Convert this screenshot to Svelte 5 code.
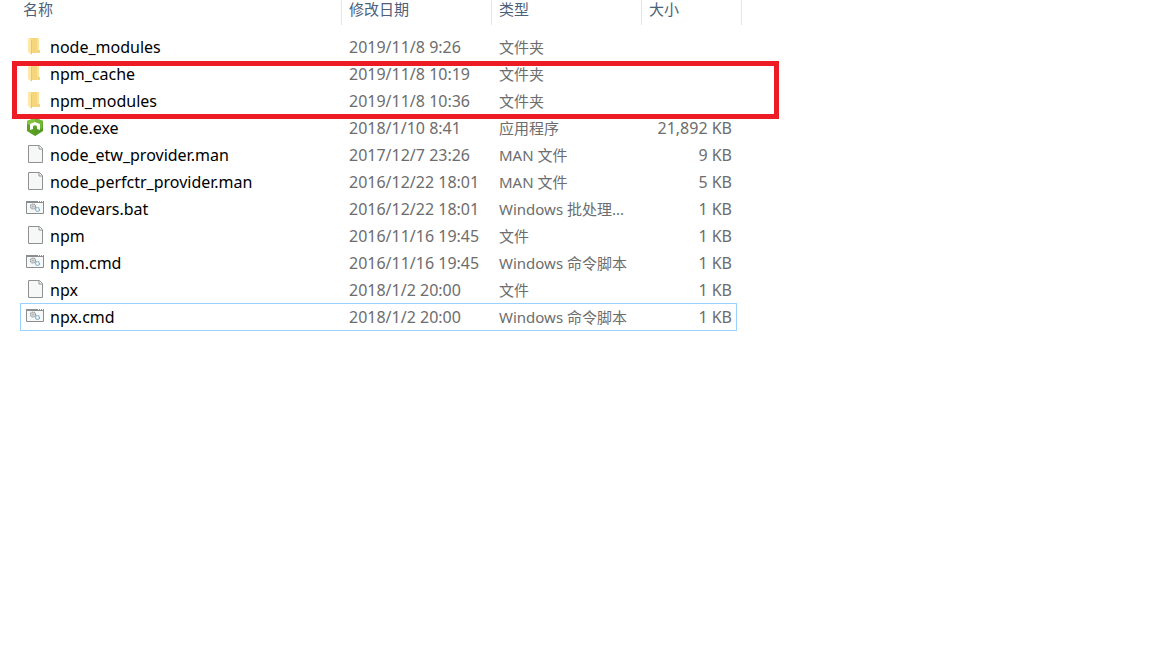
<script lang="ts">
	type Kind = 'folder' | 'node' | 'page' | 'script';
	type Entry = { name: string; date: string; type: string; size: string; kind: Kind };

	const columns = ['名称', '修改日期', '类型', '大小'];

	const entries: Entry[] = [
		{ name: 'node_modules', date: '2019/11/8 9:26', type: '文件夹', size: '', kind: 'folder' },
		{ name: 'npm_cache', date: '2019/11/8 10:19', type: '文件夹', size: '', kind: 'folder' },
		{ name: 'npm_modules', date: '2019/11/8 10:36', type: '文件夹', size: '', kind: 'folder' },
		{ name: 'node.exe', date: '2018/1/10 8:41', type: '应用程序', size: '21,892 KB', kind: 'node' },
		{ name: 'node_etw_provider.man', date: '2017/12/7 23:26', type: 'MAN 文件', size: '9 KB', kind: 'page' },
		{ name: 'node_perfctr_provider.man', date: '2016/12/22 18:01', type: 'MAN 文件', size: '5 KB', kind: 'page' },
		{ name: 'nodevars.bat', date: '2016/12/22 18:01', type: 'Windows 批处理...', size: '1 KB', kind: 'script' },
		{ name: 'npm', date: '2016/11/16 19:45', type: '文件', size: '1 KB', kind: 'page' },
		{ name: 'npm.cmd', date: '2016/11/16 19:45', type: 'Windows 命令脚本', size: '1 KB', kind: 'script' },
		{ name: 'npx', date: '2018/1/2 20:00', type: '文件', size: '1 KB', kind: 'page' },
		{ name: 'npx.cmd', date: '2018/1/2 20:00', type: 'Windows 命令脚本', size: '1 KB', kind: 'script' }
	];

	let focused = $state('npx.cmd');
</script>

{#snippet icon(kind: Kind)}
	<svg class="icon" viewBox="0 0 18 18" aria-hidden="true">
		{#if kind === 'folder'}
			<path d="M4 1h9v12h1v3H5z" fill="#f6d67c" />
			<path d="M11 1h2v12h-2z" fill="#fae39c" />
			<path d="M2 1h1l3 2v15l-4-3z" fill="#ffe8a6" />
			<path d="M5 3h1v14H5z" fill="#edc663" />
		{:else if kind === 'node'}
			<path d="M9 0l8 3v10l-8 5-8-5V3z" fill="#5b9f24" />
			<path d="M9 0l8 3-1 8L1 6V3z" fill="#85c441" />
			<path d="M9 0l8 3v10l-8 5z" fill="#438a1d" opacity=".25" />
			<path d="M4 12V6l5-2 5 2v6l-3-1V8L9 7 7 8v3z" fill="#fff" />
		{:else if kind === 'page'}
			<path d="M2.500.500h11l3 3v14h-14z" fill="#f6f7f7" stroke="#8f9091" />
			<path d="M13 .500v3.500h3.500" fill="#fff" stroke="#8f9091" />
		{:else}
			<path d="M.500 2.500h17v12H.500z" fill="#f7f8f8" stroke="#8b8e91" />
			<path d="M0 2h18v2H0z" fill="#8b8e91" />
			<path d="M12 2.500h1M14 2.500h1M16 2.500h1" stroke="#fff" />
			<circle cx="7" cy="7.500" r="2.500" fill="#eff0f0" stroke="#96999b" stroke-width="1.200" stroke-dasharray="1.500 .5" />
			<circle cx="7" cy="7.500" r=".8" fill="#fff" stroke="#888b8e" stroke-width=".7" />
			<circle cx="11.500" cy="10.500" r="2" fill="#e8f4fb" stroke="#7ba6c1" stroke-width="1.200" stroke-dasharray="1.300 .5" />
			<circle cx="11.500" cy="10.500" r=".7" fill="#fff" />
		{/if}
	</svg>
{/snippet}

<main>
	<table>
		<colgroup>
			<col class="col-name" />
			<col class="col-date" />
			<col class="col-type" />
			<col class="col-size" />
		</colgroup>
		<thead>
			<tr>
				{#each columns as column}
					<th scope="col"><button type="button">{column}</button></th>
				{/each}
			</tr>
		</thead>
		<tbody>
			{#each entries as entry}
				<tr
					class:focused={entry.name === focused}
					class:marked={entry.name === 'npm_cache'}
					onclick={() => (focused = entry.name)}
				>
					<td>
						<div class="name">
							{@render icon(entry.kind)}
							<span>{entry.name}</span>
						</div>
					</td>
					<td>{entry.date}</td>
					<td class="type">{entry.type}</td>
					<td class="size">{entry.size}</td>
				</tr>
			{/each}
		</tbody>
	</table>
</main>

<style>
	:global(body) {
		margin: 0;
		background: #fff;
	}

	main {
		padding-left: 20px;
		font-family: 'Noto Sans', 'Noto Sans CJK SC', sans-serif;
		font-size: 16px;
		line-height: 20px;
		color: #6d6d6d;
	}

	table {
		table-layout: fixed;
		width: 722px;
		border-collapse: separate;
		border-spacing: 0;
	}

	.col-name {
		width: 322px;
	}

	.col-date,
	.col-type {
		width: 150px;
	}

	.col-size {
		width: 100px;
	}

	th {
		height: 25px;
		padding: 0;
		border-right: 1px solid #e5e5e5;
		text-align: left;
		vertical-align: top;
	}

	th button {
		display: block;
		width: 100%;
		padding: 0 7px;
		border: 0;
		background: none;
		font-family: inherit;
		font-size: 15px;
		font-weight: 400;
		line-height: 18px;
		color: #4c607a;
		text-align: left;
	}

	th:first-child button {
		padding-left: 3px;
	}

	tbody::before {
		content: '';
		display: block;
		height: 9px;
	}

	tbody tr {
		position: relative;
	}

	td {
		height: 25px;
		padding: 0 7px 2px;
		white-space: nowrap;
	}

	td:first-child {
		padding-left: 6px;
	}

	td.type {
		font-size: 15px;
	}

	td.size {
		padding-right: 10px;
		text-align: right;
	}

	.name {
		display: flex;
		align-items: center;
		gap: 6px;
		color: #000;
	}

	.icon {
		width: 18px;
		height: 18px;
		margin-bottom: 2px;
	}

	.focused td:last-child::after {
		content: '';
		position: absolute;
		inset: -1px 5px 0 0;
		border: 1px solid #99d1ff;
		pointer-events: none;
	}

	/* red frame round this row and the next one */
	.marked td:first-child::before {
		content: '';
		position: absolute;
		z-index: 1;
		top: 0;
		left: -8px;
		right: -37px;
		height: 48px;
		border: 5px solid #ed1c24;
		pointer-events: none;
	}
</style>
